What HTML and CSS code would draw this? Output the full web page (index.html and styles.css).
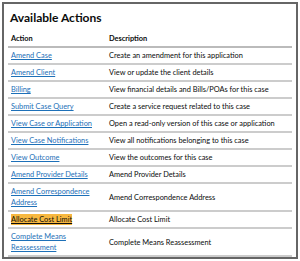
FILE: index.html
```html
<!DOCTYPE html>
<html lang="en">
<head>
  <meta charset="UTF-8" />
  <title>Available Actions</title>
  <link rel="stylesheet" href="styles.css">
</head>
<body>
  <div class="panel">
    <h2>Available Actions</h2>
    <table class="actions">
      <thead>
        <tr><th class="col-action">Action</th><th>Description</th></tr>
      </thead>
      <tbody>
        <tr><td><a href="#">Amend Case</a></td><td>Create an amendment for this application</td></tr>
        <tr><td><a href="#">Amend Client</a></td><td>View or update the client details</td></tr>
        <tr><td><a href="#">Billing</a></td><td>View financial details and Bills/POAs for this case</td></tr>
        <tr><td><a href="#">Submit Case Query</a></td><td>Create a service request related to this case</td></tr>
        <tr><td><a href="#">View Case or Application</a></td><td>Open a read-only version of this case or application</td></tr>
        <tr><td><a href="#">View Case Notifications</a></td><td>View all notifications belonging to this case</td></tr>
        <tr><td><a href="#">View Outcome</a></td><td>View the outcomes for this case</td></tr>
        <tr><td><a href="#">Amend Provider Details</a></td><td>Amend Provider Details</td></tr>
        <tr><td><a href="#">Amend Correspondence Address</a></td><td>Amend Correspondence Address</td></tr>
        <tr><td><a href="#" class="focused">Allocate Cost Limit</a></td><td>Allocate Cost Limit</td></tr>
        <tr><td><a href="#">Complete Means Reassessment</a></td><td>Complete Means Reassessment</td></tr>
      </tbody>
    </table>
  </div>
</body>
</html>
```
FILE: styles.css
```css
* { margin: 0; padding: 0; box-sizing: border-box; }
body {
  font-family: Lato, "Open Sans", sans-serif;
  background: #fff;
  color: #0b0c0c;
  padding: 2px;
}
.panel {
  width: 296px;
  height: 257px;
  border: 2px solid #666;
  padding: 6px 4px 0 4px;
}
.panel h2 {
  font-size: 12px;
  font-weight: 700;
  line-height: 14px;
  margin: 1px 0 2px 2px;
}
.actions {
  width: 100%;
  border-collapse: collapse;
  font-size: 7.4px;
  line-height: 11px;
}
.actions th {
  text-align: left;
  font-weight: 700;
  padding: 6px 3px 2px;
  border-bottom: 2px solid #bbb;
}
.actions td {
  padding: 2px 3px;
  border-bottom: 2px solid #ccc;
  vertical-align: middle;
}
.col-action { width: 98px; }
.actions a {
  color: #1d70b8;
  text-decoration: underline;
}
.actions a.focused {
  background: #f7b840;
  color: #0b0c0c;
  box-shadow: 0 -1px #f7b840, 0 1px #f7b840;
}
```
